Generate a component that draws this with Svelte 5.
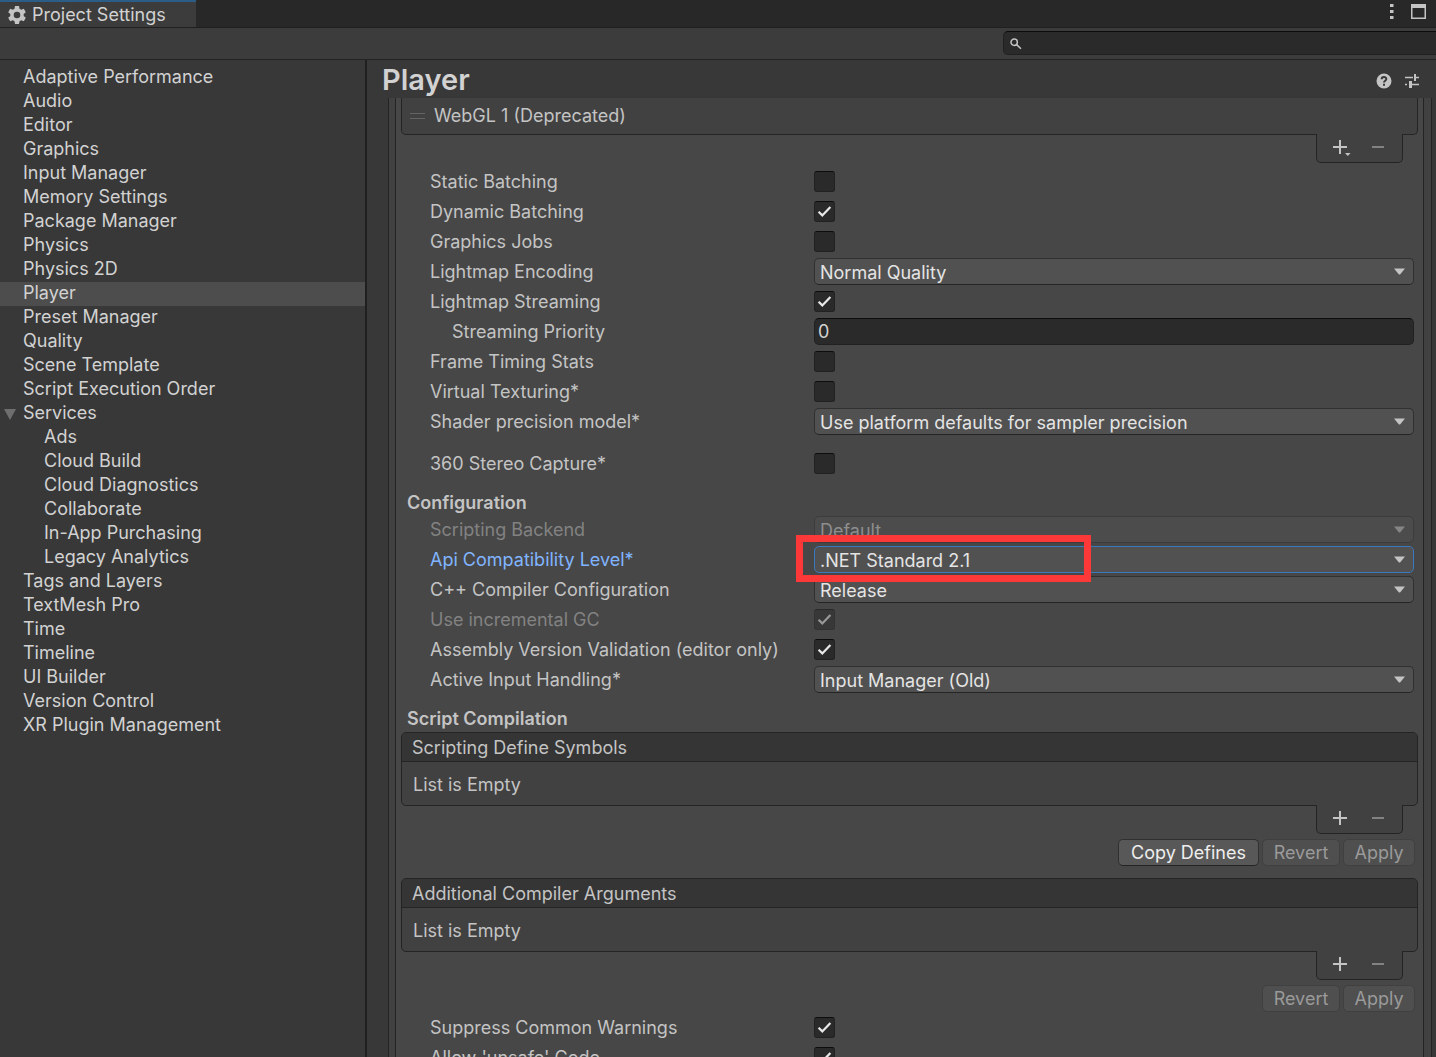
<script lang="ts">
	interface Section {
		label: string;
		children?: string[];
	}

	interface Setting {
		id:        string;
		label:     string;
		type:      'toggle' | 'select' | 'number';
		value:     boolean | string;
		indent?:   boolean;
		disabled?: boolean;
		focused?:  boolean;
		spaced?:   boolean;
	}

	const sections: Section[] = [
		{ label: 'Adaptive Performance' },
		{ label: 'Audio' },
		{ label: 'Editor' },
		{ label: 'Graphics' },
		{ label: 'Input Manager' },
		{ label: 'Memory Settings' },
		{ label: 'Package Manager' },
		{ label: 'Physics' },
		{ label: 'Physics 2D' },
		{ label: 'Player' },
		{ label: 'Preset Manager' },
		{ label: 'Quality' },
		{ label: 'Scene Template' },
		{ label: 'Script Execution Order' },
		{
			label: 'Services',
			children: ['Ads', 'Cloud Build', 'Cloud Diagnostics', 'Collaborate', 'In-App Purchasing', 'Legacy Analytics'],
		},
		{ label: 'Tags and Layers' },
		{ label: 'TextMesh Pro' },
		{ label: 'Time' },
		{ label: 'Timeline' },
		{ label: 'UI Builder' },
		{ label: 'Version Control' },
		{ label: 'XR Plugin Management' },
	];

	const rendering: Setting[] = [
		{ id: 'static-batching', label: 'Static Batching', type: 'toggle', value: false },
		{ id: 'dynamic-batching', label: 'Dynamic Batching', type: 'toggle', value: true },
		{ id: 'graphics-jobs', label: 'Graphics Jobs', type: 'toggle', value: false },
		{ id: 'lightmap-encoding', label: 'Lightmap Encoding', type: 'select', value: 'Normal Quality' },
		{ id: 'lightmap-streaming', label: 'Lightmap Streaming', type: 'toggle', value: true },
		{ id: 'streaming-priority', label: 'Streaming Priority', type: 'number', value: '0', indent: true },
		{ id: 'frame-timing', label: 'Frame Timing Stats', type: 'toggle', value: false },
		{ id: 'virtual-texturing', label: 'Virtual Texturing*', type: 'toggle', value: false },
		{ id: 'shader-precision', label: 'Shader precision model*', type: 'select', value: 'Use platform defaults for sampler precision' },
		{ id: 'stereo-capture', label: '360 Stereo Capture*', type: 'toggle', value: false, spaced: true },
	];

	const configuration: Setting[] = [
		{ id: 'scripting-backend', label: 'Scripting Backend', type: 'select', value: 'Default', disabled: true },
		{ id: 'api-level', label: 'Api Compatibility Level*', type: 'select', value: '.NET Standard 2.1', focused: true },
		{ id: 'cpp-config', label: 'C++ Compiler Configuration', type: 'select', value: 'Release' },
		{ id: 'incremental-gc', label: 'Use incremental GC', type: 'toggle', value: true, disabled: true },
		{ id: 'assembly-validation', label: 'Assembly Version Validation (editor only)', type: 'toggle', value: true },
		{ id: 'input-handling', label: 'Active Input Handling*', type: 'select', value: 'Input Manager (Old)' },
	];

	const compilation: Setting[] = [
		{ id: 'suppress-warnings', label: 'Suppress Common Warnings', type: 'toggle', value: true },
		{ id: 'allow-unsafe', label: "Allow 'unsafe' Code", type: 'toggle', value: true },
	];

	let selected = $state('Player');
	let servicesOpen = $state(true);
	let search = $state('');
</script>

{#snippet item(label: string, child: boolean)}
	<button class="item" class:child class:selected={selected === label} onclick={() => (selected = label)}>
		{label}
	</button>
{/snippet}

{#snippet row(s: Setting)}
	<div class="row" class:indent={s.indent} class:disabled={s.disabled} class:focused={s.focused} class:spaced={s.spaced}>
		<label for={s.id}>{s.label}</label>
		<div class="field">
			{#if s.type === 'toggle'}
				<span class="toggle">
					<input id={s.id} type="checkbox" checked={s.value === true} disabled={s.disabled} />
					<svg viewBox="0 0 21 21" aria-hidden="true"><path d="M4.600 10.800l3.700 3.600L16.400 6" /></svg>
				</span>
			{:else if s.type === 'number'}
				<input id={s.id} class="text" type="text" value={s.value} />
			{:else}
				<select id={s.id} disabled={s.disabled}>
					<option>{s.value}</option>
				</select>
				<svg class="arrow" viewBox="0 0 11 7" aria-hidden="true"><path d="M0 .5h11L6.500 6Q5.500 7 4.500 6z" /></svg>
			{/if}
			{#if s.focused}
				<div class="highlight"></div>
			{/if}
		</div>
	</div>
{/snippet}

{#snippet listFooter(menu: boolean)}
	<div class="list-footer">
		<button aria-label="Add">
			<svg viewBox="0 0 20 20"><path d="M10 3v14M3 10h14" />{#if menu}<path class="caret" d="M15 16h5.500l-2.700 3z" />{/if}</svg>
		</button>
		<button aria-label="Remove" disabled>
			<svg viewBox="0 0 20 20"><path d="M4 10h12" /></svg>
		</button>
	</div>
{/snippet}

{#snippet emptyList(title: string)}
	<section class="list">
		<h3>{title}</h3>
		<p>List is Empty</p>
	</section>
	{@render listFooter(false)}
{/snippet}

<div class="window">
	<header class="tabs">
		<button class="tab">
			<svg class="gear" viewBox="0 0 18 18" aria-hidden="true">
				<path
					fill-rule="evenodd"
					d="M7 0h4l.5 2.700 1.700 1 2.600-.9 2 3.400L15.700 8v2l2.100 1.800-2 3.400-2.600-.9-1.700 1L11 18H7l-.5-2.700-1.700-1-2.600.9-2-3.400L2.300 10V8L.2 6.200l2-3.400 2.600.9 1.700-1zM9 5.700a3.300 3.300 0 1 0 0 6.600 3.300 3.300 0 0 0 0-6.600z"
				/>
			</svg>
			Project Settings
		</button>
		<div class="window-actions">
			<button aria-label="Menu">
				<svg width="4" height="16" viewBox="0 0 4 16"><path d="M0 0h3.500v3H0zM0 6h3.500v3H0zM0 12h3.500v3H0z" /></svg>
			</button>
			<button aria-label="Maximize">
				<svg width="15" height="16" viewBox="0 0 15 16"><path fill-rule="evenodd" d="M0 0h15v15H0zM1.500 4v9.500h12V4z" /></svg>
			</button>
		</div>
	</header>

	<div class="toolbar">
		<label class="search">
			<svg viewBox="0 0 12 12" aria-hidden="true"><circle cx="4.200" cy="4.200" r="3.200" /><path d="M6.600 6.600l4.400 4.200" /></svg>
			<input type="text" aria-label="Search settings" bind:value={search} />
		</label>
	</div>

	<div class="body">
		<nav>
			{#each sections as section}
				{#if section.children}
					<div class="group">
						<button class="fold" class:closed={!servicesOpen} aria-label="Toggle {section.label}" onclick={() => (servicesOpen = !servicesOpen)}>
							<svg viewBox="0 0 12 12"><path d="M0 0h12L6 11z" /></svg>
						</button>
						{@render item(section.label, false)}
					</div>
					{#if servicesOpen}
						{#each section.children as child}
							{@render item(child, true)}
						{/each}
					{/if}
				{:else}
					{@render item(section.label, false)}
				{/if}
			{/each}
		</nav>

		<main>
			<div class="title">
				<h1>Player</h1>
				<button aria-label="Help">
					<svg viewBox="0 0 16 16">
						<circle cx="8" cy="8" r="7.500" />
						<path class="mark" d="M5.700 6.200C5.700 3.200 10.300 3.200 10.300 6 10.300 7.700 8 7.700 8 9.600M8 10.800v2" />
					</svg>
				</button>
				<button aria-label="Presets">
					<svg viewBox="0 0 16 16"><path class="line" d="M1 4.500h8M11 4.500h4M1 11.500h2M7 11.500h8" /><path d="M10 1h2v7h-2zM5 8h3v7H5z" /></svg>
				</button>
			</div>

			<div class="outer">
				<div class="inner">
					<section class="list apis">
						<svg class="handle" viewBox="0 0 15 8" aria-hidden="true"><path d="M0 1.500h15M0 6.500h15" /></svg>
						WebGL 1 (Deprecated)
					</section>
					{@render listFooter(true)}

					<div class="rows">
						{#each rendering as s (s.id)}
							{@render row(s)}
						{/each}
					</div>

					<h2>Configuration</h2>
					<div class="rows">
						{#each configuration as s (s.id)}
							{@render row(s)}
						{/each}
					</div>

					<h2>Script Compilation</h2>
					{@render emptyList('Scripting Define Symbols')}
					<div class="buttons">
						<button class="copy">Copy Defines</button>
						<button class="revert" disabled>Revert</button>
						<button disabled>Apply</button>
					</div>

					<div class="gap"></div>
					{@render emptyList('Additional Compiler Arguments')}
					<div class="buttons">
						<button class="revert" disabled>Revert</button>
						<button disabled>Apply</button>
					</div>

					<div class="rows last">
						{#each compilation as s (s.id)}
							{@render row(s)}
						{/each}
					</div>
				</div>
			</div>
		</main>
	</div>
</div>

<style>
	:global(body) {
		margin: 0;
		background: #383838;
	}

	.window {
		--line: #242424;
		--text: #c4c4c4;
		display: flex;
		flex-direction: column;
		height: 100vh;
		overflow: hidden;
		background: #383838;
		color: var(--text);
		font-family: Inter, 'Liberation Sans', sans-serif;
		font-size: 18px;
		line-height: 24px;
	}

	.window * {
		box-sizing: border-box;
	}

	button,
	input,
	select {
		margin: 0;
		padding: 0;
		border: none;
		outline: none;
		background: none;
		color: inherit;
		font: inherit;
	}

	svg {
		display: block;
		flex: none;
		fill: currentColor;
	}

	h1,
	h2,
	h3,
	p {
		margin: 0;
		font-size: inherit;
		font-weight: 400;
	}

	.tabs {
		display: flex;
		justify-content: space-between;
		flex: none;
		height: 28px;
		background: #282828;
		border-bottom: 1px solid #202020;
	}

	.tab {
		display: flex;
		align-items: center;
		gap: 6px;
		min-width: 196px;
		padding: 0 8px;
		background: #3c3c3c;
		border-top: 2px solid #2c5d87;
		color: #d2d2d2;
	}

	.gear {
		width: 18px;
		height: 18px;
		color: var(--text);
	}

	.window-actions {
		display: flex;
		align-items: flex-start;
		gap: 17px;
		padding: 4px 10px 0 0;
	}

	.toolbar {
		display: flex;
		justify-content: flex-end;
		flex: none;
		height: 32px;
		padding-top: 3px;
		background: #3c3c3c;
		border-bottom: 1px solid #232323;
	}

	.search {
		display: flex;
		align-items: center;
		gap: 8px;
		width: 433px;
		height: 24px;
		padding: 1px 0 0 6px;
		background: #2a2a2a;
		border: 1px solid #212121;
		border-top-color: #0d0d0d;
		border-right: none;
		border-radius: 5px 0 0 5px;
	}

	.search svg {
		width: 12px;
		height: 12px;
		fill: none;
		stroke: currentColor;
		stroke-width: 1.5;
	}

	.search input {
		flex: 1;
		min-width: 0;
	}

	.body {
		display: flex;
		flex: 1;
		min-height: 0;
	}

	nav {
		display: flex;
		flex-direction: column;
		flex: none;
		width: 367px;
		padding-top: 6px;
		border-right: 2px solid #202020;
		color: #d2d2d2;
	}

	.item {
		flex: none;
		width: 100%;
		height: 24px;
		padding: 0 0 2px 23px;
		line-height: 22px;
		text-align: left;
	}

	.item.child {
		padding-left: 44px;
	}

	.item.selected {
		background: #4d4d4d;
	}

	.group {
		position: relative;
		display: flex;
	}

	.fold {
		position: absolute;
		top: 7px;
		left: 4px;
		color: #6e6e6e;
	}

	.fold svg {
		width: 12px;
		height: 12px;
	}

	.fold.closed svg {
		transform: rotate(-90deg);
	}

	main {
		display: flex;
		flex-direction: column;
		flex: 1;
		min-width: 0;
	}

	.title {
		display: flex;
		align-items: center;
		flex: none;
		gap: 12px;
		height: 38px;
		padding: 2px 16px 0 15px;
	}

	.title h1 {
		flex: 1;
		color: #d2d2d2;
		font-size: 29px;
		font-weight: 600;
	}

	.title button {
		padding-top: 2px;
	}

	.title svg {
		width: 16px;
		height: 16px;
	}

	.title .mark {
		fill: none;
		stroke: #383838;
		stroke-width: 2;
	}

	.title .line {
		fill: none;
		stroke: currentColor;
		stroke-width: 1.3;
	}

	.outer {
		flex: 1;
		min-height: 0;
		margin: 0 4px 0 21px;
		padding: 0 7px 0 6px;
		overflow: hidden;
		background: #414141;
		border: solid var(--line);
		border-width: 0 1px;
	}

	.inner {
		background: #474747;
		border: solid var(--line);
		border-width: 0 1px;
	}

	.list {
		margin: 0 5px;
		background: #414141;
		border: 1px solid var(--line);
		border-radius: 5px;
	}

	.list.apis {
		display: flex;
		align-items: center;
		gap: 9px;
		height: 37px;
		padding-left: 8px;
		border-top: none;
		border-radius: 0 0 5px 5px;
	}

	.handle {
		width: 15px;
		height: 8px;
		stroke: #646464;
	}

	.list h3 {
		height: 29px;
		padding-left: 10px;
		background: #353535;
		border-bottom: 1px solid var(--line);
		border-radius: 4px 4px 0 0;
		line-height: 30px;
	}

	.list p {
		height: 43px;
		padding-left: 11px;
		line-height: 46px;
	}

	.list-footer {
		position: relative;
		display: flex;
		justify-content: space-between;
		width: 87px;
		height: 29px;
		margin: -1px 20px 5px auto;
		padding: 0 14px 2px 13px;
		background: #414141;
		border: 1px solid var(--line);
		border-top: none;
		border-radius: 0 0 5px 5px;
	}

	.list-footer svg {
		width: 20px;
		height: 20px;
		overflow: visible;
		stroke: currentColor;
		stroke-width: 2;
	}

	.list-footer .caret {
		stroke: none;
	}

	.list-footer button:disabled {
		color: #828282;
	}

	.rows {
		display: flex;
		flex-direction: column;
		gap: 3px;
		padding: 0 9px 0 34px;
	}

	.rows.last {
		padding-top: 2px;
	}

	.row {
		display: flex;
		height: 27px;
		line-height: 27px;
	}

	.row.spaced {
		margin-top: 12px;
	}

	.row label {
		flex: none;
		width: 384px;
		white-space: nowrap;
	}

	.row.indent label {
		padding-left: 22px;
	}

	.row.focused label {
		color: #81b4ff;
	}

	.row.disabled label {
		color: #828282;
	}

	.field {
		position: relative;
		flex: 1;
		min-width: 0;
	}

	.field select,
	.field .text {
		display: block;
		width: 100%;
		height: 27px;
		border: 1px solid #303030;
		border-radius: 5px;
	}

	.field select {
		appearance: none;
		padding: 0 24px 0 5px;
		background: #515151;
		border-bottom-color: var(--line);
		color: #e4e4e4;
	}

	.field .text {
		padding-left: 3px;
		background: #2a2a2a;
		border-color: #212121;
		border-top-color: #0d0d0d;
		color: #d2d2d2;
	}

	.arrow {
		position: absolute;
		top: 10px;
		right: 9px;
		width: 11px;
		height: 7px;
		pointer-events: none;
	}

	.field select:disabled {
		background: #4c4c4c;
		border-color: #3c3c3c;
		color: #8e8e8e;
		opacity: 1;
	}

	.disabled .arrow {
		color: #858585;
	}

	.focused .field select {
		border-color: #3a79bb;
	}

	.highlight {
		position: absolute;
		z-index: 1;
		top: -11px;
		left: -18px;
		width: 295px;
		height: 47px;
		border: 7px solid #fd3838;
		pointer-events: none;
	}

	.toggle {
		display: grid;
		width: 21px;
		height: 21px;
		margin-top: 3px;
	}

	.toggle input,
	.toggle svg {
		grid-area: 1 / 1;
		width: 21px;
		height: 21px;
	}

	.toggle input {
		appearance: none;
		background: #2a2a2a;
		border: 1px solid #212121;
		border-top-color: #0d0d0d;
		border-radius: 3px;
	}

	.toggle svg {
		fill: none;
		stroke: #e8e8e8;
		stroke-width: 2.2;
		pointer-events: none;
		visibility: hidden;
	}

	.toggle input:checked + svg {
		visibility: visible;
	}

	.disabled .toggle {
		opacity: 0.5;
	}

	h2 {
		height: 27px;
		margin-top: 12px;
		padding-left: 11px;
		font-weight: 600;
		line-height: 27px;
	}

	.buttons {
		display: flex;
		justify-content: flex-end;
		gap: 3px;
		padding-right: 8px;
	}

	.buttons button {
		min-width: 72px;
		height: 27px;
		padding: 0 8px;
		background: #585858;
		border: 1px solid #303030;
		border-bottom-color: var(--line);
		border-radius: 5px;
		color: #eeeeee;
		line-height: 25px;
	}

	.buttons .copy {
		min-width: 141px;
	}

	.buttons .revert {
		min-width: 78px;
	}

	.buttons button:disabled {
		background: #4f4f4f;
		border-color: #404040;
		color: #9a9a9a;
	}

	.gap {
		height: 12px;
	}
</style>
